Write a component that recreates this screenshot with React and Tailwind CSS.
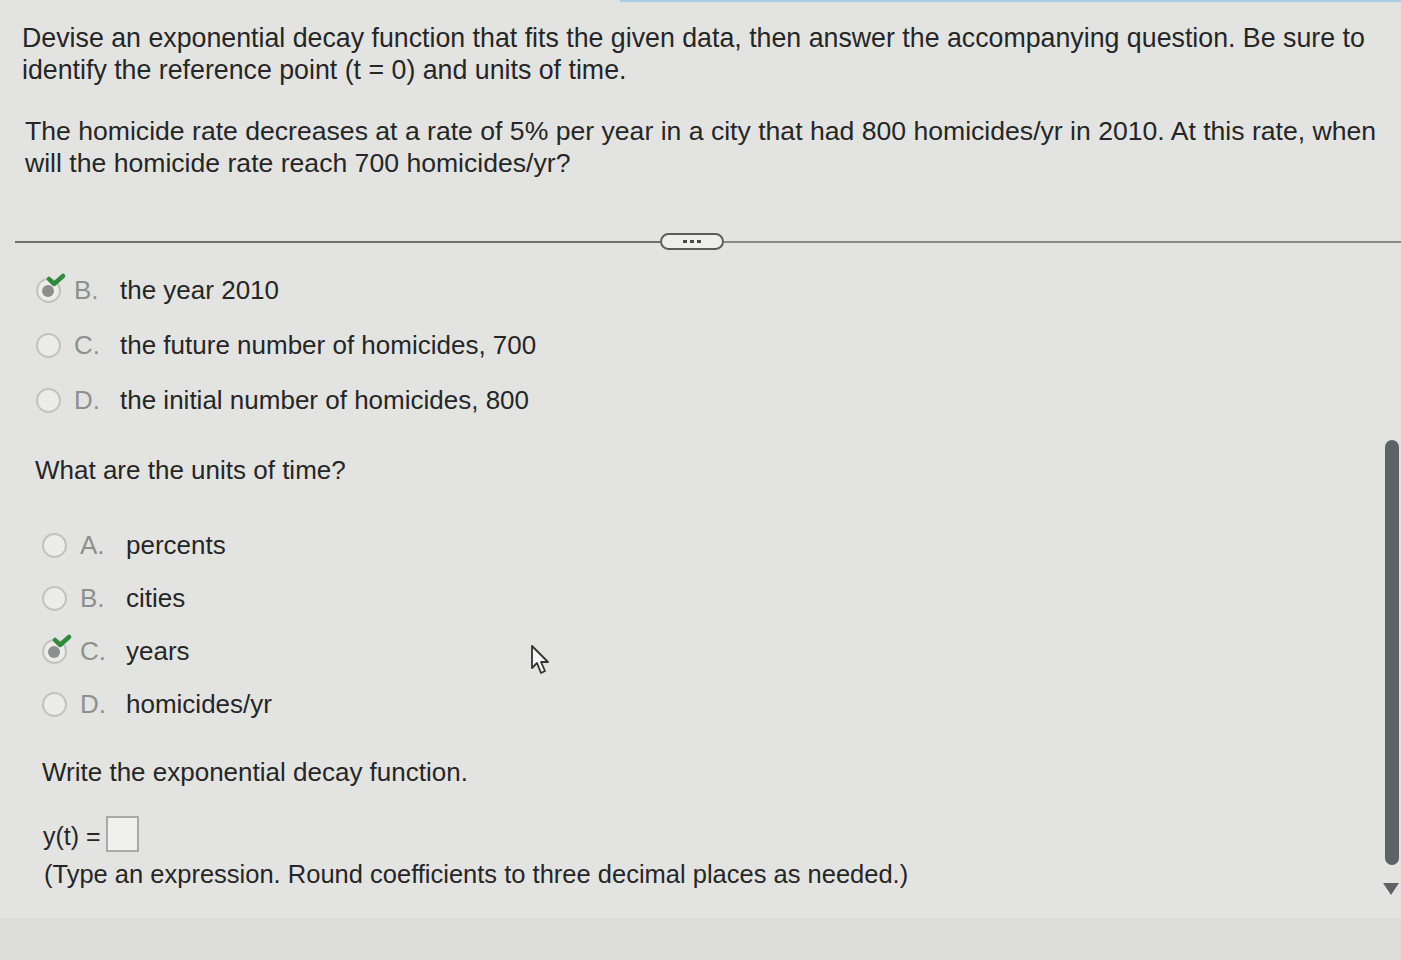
import React from 'react'

const font = { fontFamily: '"Liberation Sans", Arial, sans-serif' }

function Radio({ checked }) {
  return (
    <span className="relative inline-flex h-[25px] w-[25px] shrink-0 items-center justify-center">
      <span className="h-[25px] w-[25px] rounded-full border-2 border-[#c2c3c1] bg-[#ecedeb]" />
      {checked && <span className="absolute left-[6px] top-[7px] h-[12px] w-[12px] rounded-full bg-[#8c8f8d]" />}
      {checked && (
        <svg className="absolute -right-[5px] -top-[5px]" width="20" height="16" viewBox="0 0 20 16">
          <path d="M3 6 L8 11 L17 3" stroke="#2f8a3a" strokeWidth="4.5" fill="none" strokeLinecap="round" strokeLinejoin="round" />
        </svg>
      )}
    </span>
  )
}

function Option({ letter, text, checked }) {
  return (
    <div className="flex items-center leading-[36px]">
      <Radio checked={checked} />
      <span className="ml-[13px] w-[46px] text-[#8f908e]">{letter}.</span>
      <span className="text-[#262626]">{text}</span>
    </div>
  )
}

export default function App() {
  return (
    <div style={font} className="relative h-[960px] w-[1401px] overflow-hidden bg-[#e3e4e2] text-[26px] text-[#262626]">
      <div className="absolute bottom-0 left-0 h-[42px] w-full bg-[#dddedc]" />
      <div className="absolute left-[620px] top-0 h-[2px] w-[781px] bg-[#a8cde8]" />

      <div className="relative pl-[22px] pt-[22px]">
        <p className="text-[26.75px] leading-[32px]">
          Devise an exponential decay function that fits the given data, then answer the accompanying question. Be sure to
          <br />
          identify the reference point (t = 0) and units of time.
        </p>
        <p className="mt-[29px] pl-[3px] text-[26.6px] leading-[32px]">
          The homicide rate decreases at a rate of 5% per year in a city that had 800 homicides/yr in 2010. At this rate, when
          <br />
          will the homicide rate reach 700 homicides/yr?
        </p>
      </div>

      <div className="relative mt-[54px] flex items-center pl-[15px]">
        <div className="h-[2px] flex-1 bg-[#6f706e]" />
        <div className="flex h-[17px] w-[64px] items-center justify-center gap-[3px] rounded-full border-2 border-[#5c5d5b] bg-[#eeefed]">
          <span className="h-[3px] w-[4px] bg-[#4a4b49]" />
          <span className="h-[3px] w-[4px] bg-[#4a4b49]" />
          <span className="h-[3px] w-[4px] bg-[#4a4b49]" />
        </div>
        <div className="h-[2px] w-[677px] bg-[#8a8b89]" />
      </div>

      <div className="relative mt-[22px] flex flex-col gap-[19px] pl-[36px]">
        <Option letter="B" text="the year 2010" checked />
        <Option letter="C" text="the future number of homicides, 700" />
        <Option letter="D" text="the initial number of homicides, 800" />
      </div>

      <p className="relative mt-[34px] pl-[35px] leading-[36px]">What are the units of time?</p>

      <div className="relative mt-[39px] flex flex-col gap-[17px] pl-[42px]">
        <Option letter="A" text="percents" />
        <Option letter="B" text="cities" />
        <Option letter="C" text="years" checked />
        <Option letter="D" text="homicides/yr" />
      </div>

      <p className="relative mt-[32px] pl-[42px] leading-[36px]">Write the exponential decay function.</p>

      <div className="relative mt-[26px] flex items-end gap-[5px] pl-[43px] text-[25px]">
        <span className="pb-[1px] leading-[30px]">y(t) =</span>
        <span className="h-[36px] w-[33px] border-2 border-[#a9aaa8] bg-[#f0f1ef]" />
      </div>
      <p className="relative mt-[4px] pl-[44px] text-[25.5px] leading-[36px]">(Type an expression. Round coefficients to three decimal places as needed.)</p>

      <div className="absolute left-[1385px] top-[440px] h-[425px] w-[14px] rounded-full bg-[#5d6266]" />
      <svg className="absolute left-[1382px] top-[882px]" width="18" height="14" viewBox="0 0 18 14">
        <path d="M1 1 H17 L9 13 Z" fill="#5d6266" />
      </svg>

      <svg className="absolute left-[530px] top-[644px]" width="22" height="32" viewBox="0 0 22 32">
        <path d="M2 2 L2 24 L7 19 L11 29 L15 27 L11 18 L18 18 Z" fill="#f5f5f5" stroke="#333" strokeWidth="1.8" strokeLinejoin="round" />
      </svg>
    </div>
  )
}
